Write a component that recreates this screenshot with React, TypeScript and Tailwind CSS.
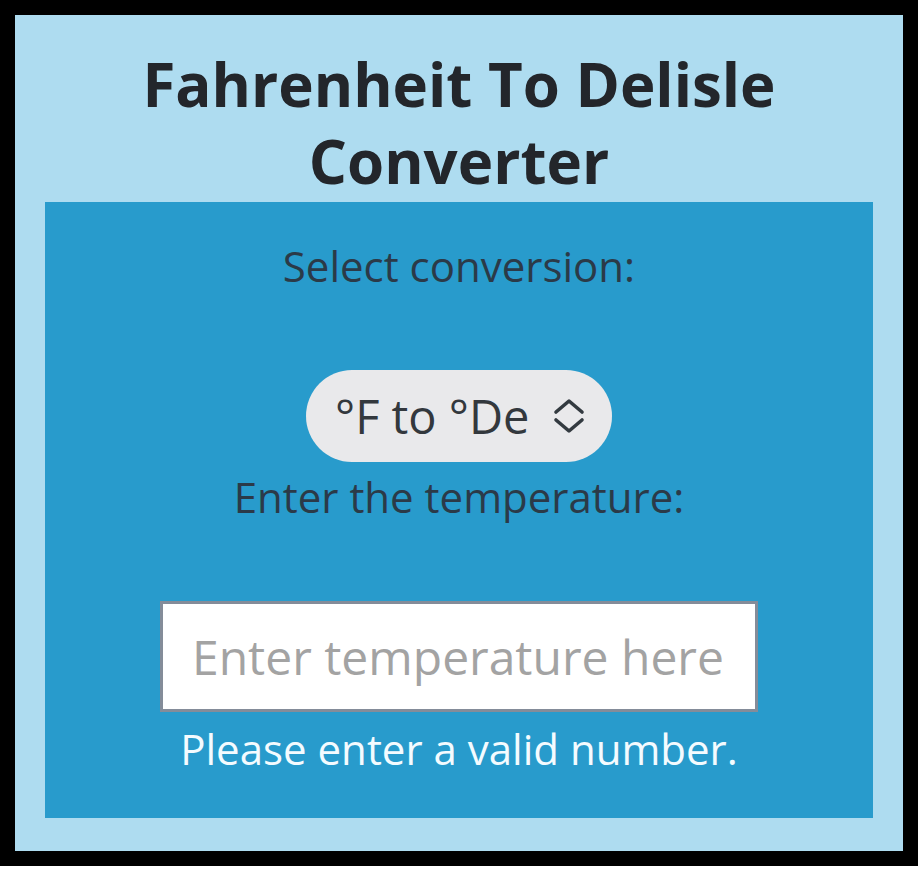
import { useState } from "react";

// Small up/down chevron drawn next to the select value
function UpDownIcon() {
    return (
        <svg
            width="36"
            height="38"
            viewBox="0 0 36 38"
            fill="none"
            stroke="#333a40"
            strokeWidth="3.6"
            strokeLinecap="round"
            strokeLinejoin="round"
        >
            <path d="M5 15 L18 4 L31 15" />
            <path d="M5 23 L18 34 L31 23" />
        </svg>
    );
}

export default function App() {
    const [mode, setMode] = useState("f-de");
    const [value, setValue] = useState("");

    const valid = value.trim() !== "" && !isNaN(Number(value));

    return (
        <div
            className="w-[918px] h-[866px] border-[15px] border-black bg-[#aedcf0] flex flex-col"
            style={{ fontFamily: '"Open Sans", "Noto Sans", sans-serif' }}
        >
            <h1 className="pt-[31px] px-[100px] text-center text-[60px] leading-[77px] font-bold text-[#23262b]">
                Fahrenheit To Delisle Converter
            </h1>

            <div className="mx-[30px] mt-[2px] h-[616px] bg-[#289bcc] flex flex-col items-center pt-[35px]">
                <label
                    htmlFor="conversion"
                    className="text-[42px] leading-[57px] text-[#2b3a48]"
                >
                    Select conversion:
                </label>

                <div className="relative mt-[76px] inline-flex">
                    <select
                        id="conversion"
                        value={mode}
                        onChange={(e) => setMode(e.target.value)}
                        className="appearance-none h-[92px] w-[306px] rounded-full bg-[#e9e9eb] pl-[29px] pr-[60px] text-[47px] text-[#33383d] outline-none"
                    >
                        <option value="f-de">°F to °De</option>
                        <option value="de-f">°De to °F</option>
                    </select>
                    <span className="pointer-events-none absolute right-[25px] top-[27px]">
                        <UpDownIcon />
                    </span>
                </div>

                <label
                    htmlFor="temperature"
                    className="mt-[6px] text-[42px] leading-[57px] text-[#2b3a48]"
                >
                    Enter the temperature:
                </label>

                <input
                    id="temperature"
                    type="text"
                    value={value}
                    onChange={(e) => setValue(e.target.value)}
                    placeholder="Enter temperature here"
                    className="mt-[76px] h-[111px] w-[598px] border-[3px] border-[#848c99] bg-white px-[29px] text-[48px] text-[#333] placeholder:text-[#a3a3a3] outline-none"
                />

                {!valid && (
                    <p className="mt-[8px] text-[42px] leading-[57px] text-[#f4fbff]">
                        Please enter a valid number.
                    </p>
                )}
            </div>
        </div>
    );
}
